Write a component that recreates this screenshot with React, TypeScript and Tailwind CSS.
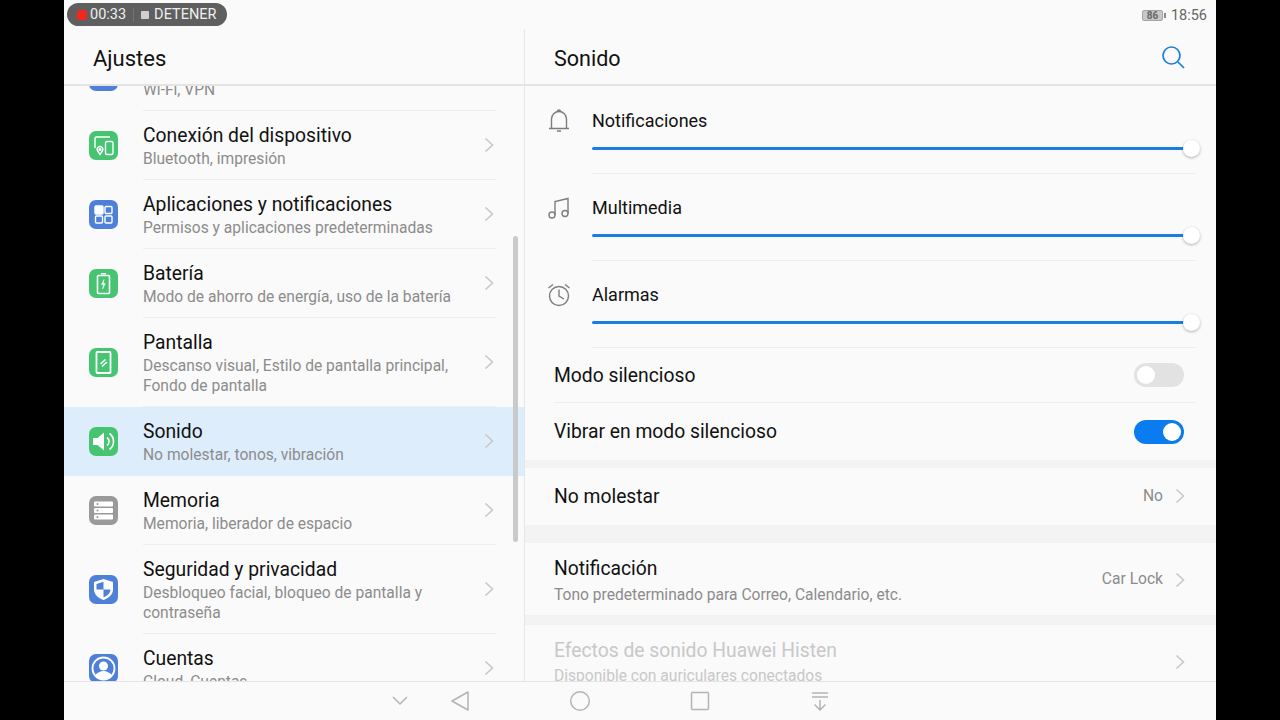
import type { ReactNode } from 'react';

const GREEN = 'bg-[#46c472]';
const BLUE = 'bg-[#4f80d8]';

function Chevron({ className = '' }: { className?: string }) {
  return (
    <svg viewBox="0 0 10 16" className={`w-[10px] h-[16px] shrink-0 ${className}`} fill="none" stroke="#c6c6c6" strokeWidth="1.5">
      <path d="M1.5 1.5 8.5 8 1.5 14.5" />
    </svg>
  );
}

function IconBox({ color, children }: { color: string; children: ReactNode }) {
  return (
    <div className={`w-[29px] h-[29px] rounded-[7px] shrink-0 flex items-center justify-center ${color}`}>
      <svg viewBox="0 0 29 29" className="w-[29px] h-[29px]" fill="none" stroke="white" strokeWidth="1.4">
        {children}
      </svg>
    </div>
  );
}

const deviceIcon = (
  <>
    <path d="M6 17V7.500A1.500 1.500 0 0 1 7.500 6H21" />
    <rect x="16.500" y="10.500" width="7.500" height="13" rx="1.500" />
    <path d="M11 23.500 8.700 20a2.800 2.800 0 1 1 4.600 0Z" />
    <circle cx="11" cy="18.500" r=".8" fill="white" />
  </>
);

const appsIcon = (
  <>
    <rect x="6" y="6" width="8" height="8" rx="1" fill="white" />
    <rect x="16" y="6.500" width="7" height="7" rx="1" />
    <rect x="6.500" y="16" width="7" height="7" rx="1" />
    <rect x="16" y="16" width="7" height="7" rx="1" />
  </>
);

const batteryIcon = (
  <>
    <rect x="8.500" y="6.500" width="12" height="18" rx="1" strokeWidth="1.600" />
    <path d="M12 4.800h5" strokeWidth="1.400" />
    <path d="M15 10.500l-2.500 5h2l-.8 4.500 2.600-5.500h-2Z" fill="white" strokeWidth=".5" />
  </>
);

const screenIcon = (
  <>
    <rect x="7.500" y="4" width="14" height="21" rx=".8" strokeWidth="1.800" />
    <path d="M11.500 16 16.500 11.500M13 18.500 18 14" strokeWidth="1.600" />
  </>
);

const soundIcon = (
  <>
    <path d="M4 11h4.500L15 5.500v18L8.500 18H4Z" fill="white" stroke="none" />
    <path d="M18 10.500a5 5 0 0 1 0 8" strokeWidth="1.600" />
    <path d="M20.500 6.500a10 10 0 0 1 0 16" strokeWidth="1.600" />
  </>
);

const storageIcon = (
  <>
    <rect x="5" y="5.500" width="19" height="5" rx="1" fill="white" stroke="none" />
    <rect x="5" y="12" width="19" height="5" rx="1" fill="white" stroke="none" />
    <rect x="5" y="18.500" width="19" height="5" rx="1" fill="white" stroke="none" />
    <circle cx="8.500" cy="8" r="1" fill="#9a9a9a" stroke="none" />
    <circle cx="8.500" cy="14.500" r="1" fill="#9a9a9a" stroke="none" />
    <circle cx="8.500" cy="21" r="1" fill="#9a9a9a" stroke="none" />
  </>
);

const shieldIcon = (
  <>
    <path d="M14.500 4 24 7v7.500c0 5-4.300 8.700-9.500 10.500C9.300 23.200 5 19.500 5 14.500V7Z" fill="white" stroke="none" />
    <path d="M14.500 6.800 7.500 9v5.500h7ZM14.500 14.500v8c3.600-1.600 7-4.300 7-8Z" fill="#4f80d8" stroke="none" />
  </>
);

const userIcon = (
  <>
    <circle cx="14.500" cy="14.500" r="11" strokeWidth="1.800" />
    <circle cx="14.500" cy="12" r="4.500" fill="white" stroke="none" />
    <path d="M6 21.500c2-3 5.500-4.500 8.500-4.500s6.500 1.500 8.500 4.500c-2 2.500-5 4-8.500 4s-6.500-1.500-8.500-4Z" fill="white" stroke="none" />
  </>
);

const menu = [
  { title: '\u00a0', sub: 'Wi-Fi, VPN', color: BLUE, icon: appsIcon, cut: true },
  { title: 'Conexión del dispositivo', sub: 'Bluetooth, impresión', color: GREEN, icon: deviceIcon },
  { title: 'Aplicaciones y notificaciones', sub: 'Permisos y aplicaciones predeterminadas', color: BLUE, icon: appsIcon },
  { title: 'Batería', sub: 'Modo de ahorro de energía, uso de la batería', color: GREEN, icon: batteryIcon },
  { title: 'Pantalla', sub: 'Descanso visual, Estilo de pantalla principal, Fondo de pantalla', color: GREEN, icon: screenIcon },
  { title: 'Sonido', sub: 'No molestar, tonos, vibración', color: GREEN, icon: soundIcon, active: true },
  { title: 'Memoria', sub: 'Memoria, liberador de espacio', color: 'bg-[#9a9a9a]', icon: storageIcon },
  { title: 'Seguridad y privacidad', sub: 'Desbloqueo facial, bloqueo de pantalla y contraseña', color: BLUE, icon: shieldIcon },
  { title: 'Cuentas', sub: 'Cloud, Cuentas', color: BLUE, icon: userIcon },
];

function MenuRow({ item }: { item: (typeof menu)[number] }) {
  return (
    <div className={`flex items-center pl-[25px] shrink-0 ${item.active ? 'bg-[#deedfb]' : ''} ${item.cut ? '-mt-[44px]' : ''}`}>
      <IconBox color={item.color}>{item.icon}</IconBox>
      <div className={`flex-1 ml-[25px] mr-[28px] flex items-center pt-[12px] ${item.active ? 'pb-[11px]' : 'pb-[10px] border-b border-[#eeeeee]'}`}>
        <div className="flex-1 min-w-0 pr-[30px]">
          <div className="text-[19.300px] leading-[26px] text-[#111111]">{item.title}</div>
          <div className="text-[15.600px] leading-[20px] text-[#8c8c8c]">{item.sub}</div>
        </div>
        <Chevron className="mr-[2px] mb-[3px]" />
      </div>
    </div>
  );
}

function VolumeRow({ label, icon }: { label: string; icon: ReactNode }) {
  return (
    <div className="flex h-[87px] shrink-0 pl-[21px] pr-[20px]">
      <svg viewBox="0 0 26 26" className="w-[26px] h-[26px] mt-[21px] shrink-0" fill="none" stroke="#7d7d7d" strokeWidth="1.400">
        {icon}
      </svg>
      <div className="ml-[20px] flex-1 border-b border-[#eeeeee] pt-[22px] relative">
        <div className="text-[18px] leading-[24px] text-[#111111]">{label}</div>
        <div className="mt-[14px] mr-[4px] h-[3px] bg-[#1a7de0] rounded-full" />
        <div className="absolute right-[-4px] top-[53px] w-[17px] h-[17px] rounded-full bg-white shadow-[0_1px_3px_rgba(0,0,0,0.3)]" />
      </div>
    </div>
  );
}

function Toggle({ on }: { on?: boolean }) {
  return (
    <div className={`w-[50px] h-[24px] rounded-full p-[2px] flex ${on ? 'bg-[#0a7cf0] justify-end' : 'bg-[#e2e2e2] justify-start'}`}>
      <div className="w-[18px] h-[18px] m-[1px] rounded-full bg-white" />
    </div>
  );
}

export default function App() {
  return (
    <div className="h-[720px] w-[1280px] bg-black overflow-hidden" style={{ fontFamily: 'Roboto, sans-serif' }}>
      <div className="mx-[64px] h-full bg-[#fafafa] flex flex-col relative">
        {/* Status bar */}
        <div className="h-[29px] flex items-center justify-between pl-[3px] pr-[9px] shrink-0">
          <div className="w-[160px] h-[23px] rounded-full bg-[#5f5f5f] flex items-center pl-[10px] pt-[1px] text-[14.500px] text-[#f0f0f0]">
            <span className="w-[10px] h-[10px] rounded-[2px] bg-[#f0281e] shrink-0" />
            <span className="ml-[3px]">00:33</span>
            <span className="w-px h-[14px] bg-[#737373] mx-[7px]" />
            <span className="w-[8px] h-[8px] rounded-[1px] bg-[#cfcfcf] shrink-0" />
            <span className="ml-[5px]">DETENER</span>
          </div>
          <div className="flex items-center mt-[2px] text-[14.500px] text-[#666666]">
            <div className="w-[21px] h-[11px] rounded-[2px] bg-[#c8c8c8] border border-[#a4a4a4] text-[10px] font-bold leading-[9px] text-center">86</div>
            <span className="w-[2px] h-[5px] bg-[#8a8a8a] ml-[1px]" />
            <span className="ml-[5px]">18:56</span>
          </div>
        </div>

        <div className="flex flex-1 min-h-0">
          {/* Left pane */}
          <div className="w-[461px] shrink-0 border-r border-[#e6e6e6] flex flex-col min-h-0">
            <div className="h-[57px] shrink-0 pl-[29px] pt-[15px] text-[22px] leading-[30px] text-[#111111] border-b-2 border-[#e4e4e4]">Ajustes</div>
            <div className="flex-1 min-h-0 overflow-hidden relative">
              <div className="flex flex-col">
                {menu.map((item) => (
                  <MenuRow key={item.sub} item={item} />
                ))}
              </div>
              <div className="absolute right-[6px] top-[150px] w-[5px] h-[306px] rounded-full bg-[#c4c4c4]/90" />
            </div>
          </div>

          {/* Right pane */}
          <div className="flex-1 flex flex-col min-h-0">
            <div className="h-[57px] shrink-0 pl-[29px] pr-[31px] pt-[15px] flex justify-between border-b-2 border-[#e4e4e4]">
              <span className="text-[21.500px] leading-[30px] text-[#111111]">Sonido</span>
              <svg viewBox="0 0 24 24" className="w-[24px] h-[24px] mt-[1px]" fill="none" stroke="#1a7de0" strokeWidth="1.700">
                <circle cx="10.500" cy="10.500" r="8.500" />
                <path d="M17 17 23 23" />
              </svg>
            </div>
            <div className="flex-1 min-h-0 overflow-hidden flex flex-col pt-[1px]">
              <VolumeRow
                label="Notificaciones"
                icon={
                  <>
                    <path d="M3 20.500h20M5.500 20.500V11a7.500 7.500 0 0 1 15 0v9.500" />
                    <path d="M11.500 3.500a1.500 1.500 0 0 1 3 0M11 23h4" />
                  </>
                }
              />
              <VolumeRow
                label="Multimedia"
                icon={
                  <>
                    <circle cx="6" cy="20" r="3" />
                    <circle cx="19" cy="18.500" r="3" />
                    <path d="M9 20V6.500L22 3.500V18.500" />
                  </>
                }
              />
              <VolumeRow
                label="Alarmas"
                icon={
                  <>
                    <circle cx="13" cy="14" r="9.500" />
                    <path d="M13 7.500V14l5 3M2.500 6 7 2.500M23.500 6 19 2.500" />
                  </>
                }
              />
              <div className="h-[55px] shrink-0 ml-[29px] mr-[20px] pr-[12px] flex items-center justify-between border-b border-[#eeeeee]">
                <span className="mt-[2px] text-[19.300px] text-[#111111]">Modo silencioso</span>
                <Toggle />
              </div>
              <div className="h-[57px] shrink-0 ml-[29px] mr-[20px] pr-[12px] flex items-center justify-between">
                <span className="mt-[2px] text-[19.300px] text-[#111111]">Vibrar en modo silencioso</span>
                <Toggle on />
              </div>
              <div className="h-[8px] shrink-0 bg-[#f3f3f3]" />
              <div className="h-[57px] shrink-0 pl-[29px] pr-[31px] flex items-center justify-between">
                <span className="mt-[2px] text-[19.300px] text-[#111111]">No molestar</span>
                <div className="flex items-center gap-[12px] text-[15.600px] text-[#8c8c8c]">
                  No
                  <Chevron />
                </div>
              </div>
              <div className="h-[18px] shrink-0 bg-[#f3f3f3]" />
              <div className="h-[72px] shrink-0 pl-[29px] pr-[31px] pt-[13px] flex justify-between">
                <div>
                  <div className="text-[19.300px] leading-[26px] text-[#111111]">Notificación</div>
                  <div className="text-[15.600px] leading-[26px] text-[#8c8c8c]">Tono predeterminado para Correo, Calendario, etc.</div>
                </div>
                <div className="flex items-center gap-[12px] h-[48px] text-[15.600px] text-[#8c8c8c]">
                  Car Lock
                  <Chevron />
                </div>
              </div>
              <div className="h-[10px] shrink-0 bg-[#f3f3f3]" />
              <div className="shrink-0 pl-[29px] pr-[31px] pt-[13px] flex justify-between">
                <div>
                  <div className="text-[19.300px] leading-[26px] text-[#c8c8c8]">Efectos de sonido Huawei Histen</div>
                  <div className="text-[15.600px] leading-[24px] text-[#c8c8c8]">Disponible con auriculares conectados</div>
                </div>
                <div className="flex items-center h-[48px]">
                  <Chevron />
                </div>
              </div>
            </div>
          </div>
        </div>

        {/* Navigation bar */}
        <div className="h-[39px] shrink-0 bg-[#fafafa] border-t border-[#e4e4e4] flex items-center pl-[316px]">
          <svg viewBox="0 0 40 24" className="w-[40px] h-[24px]" fill="none" stroke="#b4b4b4" strokeWidth="1.500">
            <path d="M13 8 20 15 27 8" />
          </svg>
          <svg viewBox="0 0 40 24" className="w-[40px] h-[24px] ml-[20px]" fill="none" stroke="#b4b4b4" strokeWidth="1.500">
            <path d="M28 3V21L12 12Z" strokeLinejoin="round" />
          </svg>
          <svg viewBox="0 0 40 24" className="w-[40px] h-[24px] ml-[80px]" fill="none" stroke="#b4b4b4" strokeWidth="1.500">
            <circle cx="20" cy="12" r="9.300" />
          </svg>
          <svg viewBox="0 0 40 24" className="w-[40px] h-[24px] ml-[80px]" fill="none" stroke="#b4b4b4" strokeWidth="1.500">
            <rect x="11.500" y="3.500" width="17" height="17" rx="1" />
          </svg>
          <svg viewBox="0 0 40 24" className="w-[40px] h-[24px] ml-[80px]" fill="none" stroke="#b4b4b4" strokeWidth="1.500">
            <path d="M12 4h16M12 8h16M20 11v10M14.500 15.500 20 21l5.500-5.500" />
          </svg>
        </div>
      </div>
    </div>
  );
}
